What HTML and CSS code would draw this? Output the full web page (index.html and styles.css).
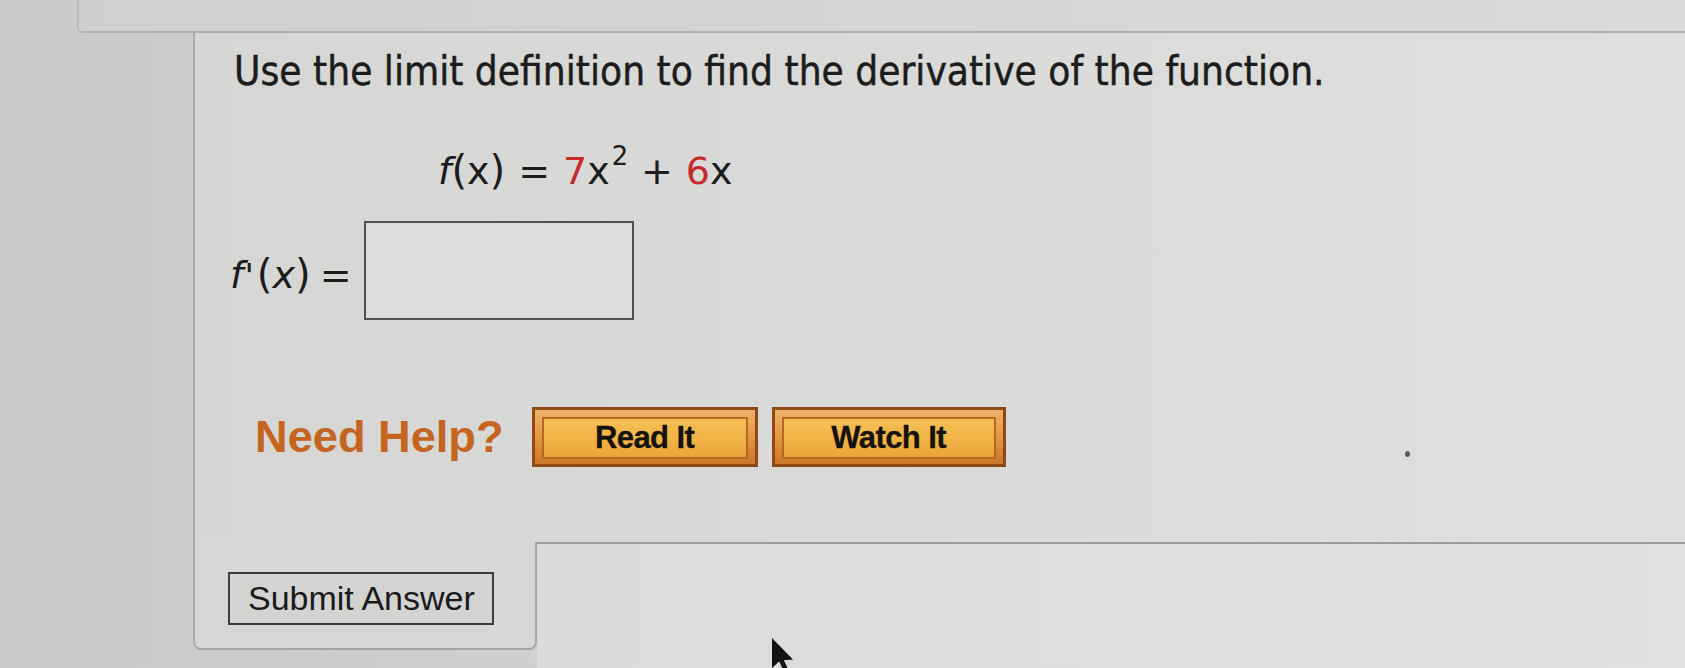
FILE: index.html
```html
<!DOCTYPE html>
<html lang="en">
<head>
<meta charset="utf-8">
<title>Limit definition question</title>
<link rel="stylesheet" href="styles.css">
</head>
<body>
<div class="screen">
  <div class="topbar"></div>
  <div class="stage">
    <div class="gutter"></div>
    <div class="card">
      <div class="card-main">
        <p class="prompt">Use the limit definition to find the derivative of the function.</p>
        <p class="equation"><i>f</i><span class="paren">(</span>x<span class="paren">)</span><span class="op">=</span><span class="coef">7</span>x<sup>2</sup><span class="op">+</span><span class="coef">6</span>x</p>
        <div class="answer-row">
          <span class="answer-label"><i>f</i><span class="prime">'</span><span class="paren">(</span><i>x</i><span class="paren">)</span><span class="op">=</span></span>
          <div class="answer-box"></div>
        </div>
        <div class="help-row">
          <span class="need-help">Need Help?</span>
          <button class="help-btn read"><span class="help-face">Read It</span></button>
          <button class="help-btn watch"><span class="help-face">Watch It</span></button>
        </div>
      </div>
      <div class="card-foot">
        <div class="foot-tab">
          <button class="submit">Submit Answer</button>
        </div>
        <div class="foot-rest"></div>
      </div>
    </div>
  </div>
  <span class="speck"></span>
  <svg class="cursor" width="30" height="40" viewBox="0 0 30 40" aria-hidden="true">
    <path d="M1.5 1 L1.5 33 L9 26 L14 37.5 L19.5 35.2 L14.5 24.5 L24 24 Z" fill="#121212" stroke="#dcdcdc" stroke-width="1" stroke-linejoin="round"/>
  </svg>
</div>
</body>
</html>
```

FILE: styles.css
```css
html, body {
  margin: 0;
  padding: 0;
}

body {
  width: 1685px;
  height: 668px;
  overflow: hidden;
  background: #cbcbc9;
}

.screen {
  position: relative;
  width: 1685px;
  height: 668px;
  background: linear-gradient(to right, #c9c9c7 0%, #cfcfcd 30%, #d5d5d3 70%, #d9d9d7 100%);
  font-family: "DejaVu Sans", Verdana, sans-serif;
  color: #1c1c1c;
}

.topbar {
  height: 31px;
  margin-left: 77px;
  border-left: 2px solid #bcbcba;
  border-bottom: 2px solid #b1b1af;
  border-bottom-left-radius: 6px;
  background: linear-gradient(to right, #cfcfcd, #d6d6d4 60%, #dadad8);
}

.stage {
  display: flex;
  height: 635px;
}

.gutter {
  width: 193px;
  flex: none;
}

.card {
  flex: 1;
  display: flex;
  flex-direction: column;
}

.card-main {
  border-left: 2px solid #acacaa;
  padding: 14px 0 75px 35px;
  background: linear-gradient(to right, #d6d6d4 0%, #dadad8 50%, #dfdfdd 100%);
}

.prompt {
  margin: 0 0 0 4px;
  font-family: "DejaVu Sans Condensed", "DejaVu Sans", sans-serif;
  font-stretch: condensed;
  font-size: 40.2px;
  line-height: 48px;
  white-space: nowrap;
  -webkit-text-stroke: 0.45px #1c1c1c;
}

.equation {
  margin: 53px 0 0 208px;
  font-size: 38px;
  line-height: 44px;
  white-space: nowrap;
}

.equation i,
.answer-label i {
  font-style: italic;
}

.paren {
  font-size: 1.06em;
}

.op {
  display: inline-block;
  margin: 0 0.34em;
}

.coef {
  color: #c62b2b;
}

sup {
  font-size: 0.68em;
  line-height: 0;
  vertical-align: 0.72em;
  margin-left: 2px;
}

.answer-row {
  display: flex;
  align-items: flex-end;
  margin-top: 28px;
}

.answer-label {
  margin: 0 0 24px 0;
  font-size: 38px;
  line-height: 40px;
  white-space: nowrap;
}

.prime {
  margin: 0 3px 0 1px;
  font-size: 0.9em;
}

.answer-label .op {
  margin: 0 0 0 0.24em;
}

.answer-box {
  width: 266px;
  height: 95px;
  margin-left: 12px;
  border: 2px solid #505050;
  background: #dcdcda;
}

.help-row {
  display: flex;
  align-items: center;
  margin-top: 87px;
}

.need-help {
  margin-left: 25px;
  margin-right: 28px;
  font-family: "Liberation Sans", Arial, sans-serif;
  font-weight: bold;
  font-size: 45.2px;
  line-height: 52px;
  color: #c4661f;
  white-space: nowrap;
}

.help-btn {
  display: block;
  box-sizing: border-box;
  height: 60px;
  margin: 0 14px 0 0;
  padding: 7px 7px 5px;
  border: 3px solid #8e4914;
  background: linear-gradient(#eeb06c 0%, #e69a46 45%, #cd7428 100%);
  cursor: pointer;
}

.help-btn.read {
  width: 226px;
}

.help-btn.watch {
  width: 234px;
}

.help-face {
  display: flex;
  align-items: center;
  justify-content: center;
  height: 100%;
  box-sizing: border-box;
  border: 2px solid #b5681f;
  background: linear-gradient(#f4bf55 0%, #f1b244 60%, #e9a43a 100%);
  font-family: "Liberation Sans", Arial, sans-serif;
  font-weight: bold;
  font-size: 31px;
  letter-spacing: -0.6px;
  color: #15120f;
  -webkit-text-stroke: 0.3px #15120f;
}

.card-foot {
  display: flex;
  flex: 1;
}

.foot-tab {
  width: 307px;
  flex: none;
  padding: 30px 0 0 33px;
  border-left: 2px solid #acacaa;
  border-right: 2px solid #a6a6a4;
  border-bottom: 2px solid #a4a4a2;
  border-radius: 0 0 8px 8px;
  height: 76px;
  background: #d7d7d5;
}

.foot-rest {
  flex: 1;
  border-top: 2px solid #9d9d9b;
  background: linear-gradient(to right, #dbdbd9, #e0e0de);
}

.submit {
  display: block;
  margin: 0;
  padding: 6px 17px 6px 18px;
  border: 2px solid #3c3c3c;
  background: #d3d3d1;
  font-family: "Liberation Sans", Arial, sans-serif;
  font-size: 34px;
  line-height: 37px;
  color: #1a1a1a;
  white-space: nowrap;
  cursor: pointer;
}

.speck {
  position: absolute;
  left: 1405px;
  top: 451px;
  width: 5px;
  height: 6px;
  border-radius: 50%;
  background: #5a5a5a;
}

.cursor {
  position: absolute;
  left: 770px;
  top: 636px;
}
```
